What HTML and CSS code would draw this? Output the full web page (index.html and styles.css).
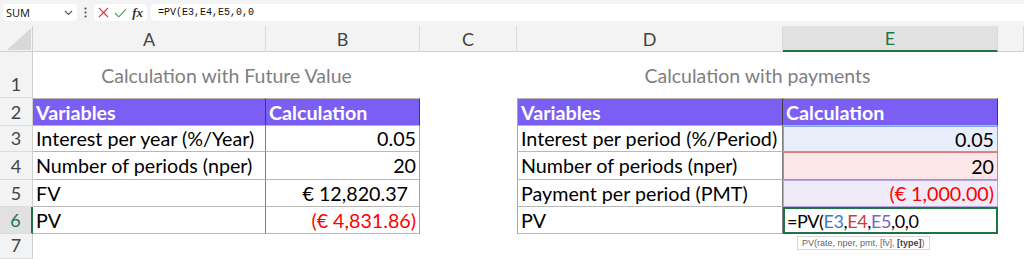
FILE: index.html
```html
<!DOCTYPE html>
<html lang="en">
<head>
  <meta charset="UTF-8">
  <title>PV - Excel</title>
  <link rel="stylesheet" href="styles.css">
</head>
<body>

<!-- FORMULA BAR -->
<div class="toolbar">
  <div class="namebox">
    <span>SUM</span>
    <svg width="9" height="6" viewBox="0 0 9 6"><path d="M1 1 L4.5 4.5 L8 1" fill="none" stroke="#555" stroke-width="1.1"/></svg>
  </div>
  <div class="grip">
    <svg width="3" height="11" viewBox="0 0 3 11"><circle cx="1.5" cy="1.5" r="1.1" fill="#555"/><circle cx="1.5" cy="5.5" r="1.1" fill="#555"/><circle cx="1.5" cy="9.5" r="1.1" fill="#555"/></svg>
  </div>
  <div class="fx-group">
    <svg width="11" height="11" viewBox="0 0 11 11"><path d="M1 1 L10 10 M10 1 L1 10" stroke="#e0393e" stroke-width="1.1"/></svg>
    <svg width="13" height="10" viewBox="0 0 13 10"><path d="M1 5 L4.8 8.8 L12 1.2" fill="none" stroke="#3fa04c" stroke-width="1.1"/></svg>
    <span class="fx">fx</span>
  </div>
  <div class="formula">=PV(E3,E4,E5,0,0</div>
</div>

<!-- PLANILHA -->
<div class="sheet">
  <!-- cabeçalho das colunas -->
  <div class="corner"><svg width="24" height="22" viewBox="0 0 24 22"><path d="M24 0 L24 22 L0 22 Z" fill="#d8d8d8"/></svg></div>
  <div class="ch">A</div>
  <div class="ch">B</div>
  <div class="ch">C</div>
  <div class="ch">D</div>
  <div class="ch ch-sel">E</div>
  <div class="ch"></div>

  <!-- linha 1 -->
  <div class="rh">1</div>
  <div class="title span2">Calculation with Future Value</div>
  <div></div>
  <div class="title span2">Calculation with payments</div>
  <div></div>

  <!-- linha 2 -->
  <div class="rh">2</div>
  <div class="cell hd col-a">Variables</div>
  <div class="cell hd col-b">Calculation</div>
  <div></div>
  <div class="cell hd col-d">Variables</div>
  <div class="cell hd col-e">Calculation</div>
  <div></div>

  <!-- linha 3 -->
  <div class="rh">3</div>
  <div class="cell col-a">Interest per year (%/Year)</div>
  <div class="cell col-b num">0.05</div>
  <div></div>
  <div class="cell col-d">Interest per period (%/Period)</div>
  <div class="cell col-e num ref-blue">0.05</div>
  <div></div>

  <!-- linha 4 -->
  <div class="rh">4</div>
  <div class="cell col-a">Number of periods (nper)</div>
  <div class="cell col-b num">20</div>
  <div></div>
  <div class="cell col-d">Number of periods (nper)</div>
  <div class="cell col-e num ref-red">20</div>
  <div></div>

  <!-- linha 5 -->
  <div class="rh">5</div>
  <div class="cell col-a">FV</div>
  <div class="cell col-b num acct">€ 12,820.37</div>
  <div></div>
  <div class="cell col-d">Payment per period (PMT)</div>
  <div class="cell col-e num ref-purple neg">(€ 1,000.00)</div>
  <div></div>

  <!-- linha 6 -->
  <div class="rh rh-sel">6</div>
  <div class="cell col-a">PV</div>
  <div class="cell col-b num neg">(€ 4,831.86)</div>
  <div></div>
  <div class="cell col-d">PV</div>
  <div class="cell col-e active">=PV(<span class="r-blue">E3</span>,<span class="r-red">E4</span>,<span class="r-purple">E5</span>,0,0</div>
  <div></div>

  <!-- linha 7 -->
  <div class="rh">7</div>
  <div class="span6"></div>
</div>

<div class="tooltip">PV(rate, nper, pmt, [fv], <b>[type]</b>)</div>

</body>
</html>
```

FILE: styles.css
```css
* {
  margin: 0; padding: 0; box-sizing: border-box;
}
body {
  font-family: Lato, "Liberation Sans", sans-serif;
  background-color: #fff;
  width: 1024px;
  height: 259px;
  overflow: hidden;
  position: relative;
}

/* Barra de fórmulas */
.toolbar {
  display: flex;
  align-items: flex-start;
  height: 26px;
  padding: 4px 0 0 3px;
  background-color: #f3f3f3;
}

.namebox {
  width: 74px;
  height: 17px;
  background: #fff;
  border-radius: 4px;
  display: flex;
  align-items: center;
  justify-content: space-between;
  padding: 0 4px 0 3px;
  font: 11px "Noto Sans", sans-serif;
  color: #222;
}

.grip {
  width: 17px;
  height: 17px;
  display: flex;
  align-items: center;
  justify-content: center;
}

.fx-group {
  width: 53px;
  height: 17px;
  background: #fff;
  border-radius: 4px;
  display: flex;
  align-items: center;
  justify-content: space-between;
  padding: 0 4px 0 4px;
}

.fx {
  font: italic bold 13px "Liberation Serif", serif;
  color: #333;
}

.formula {
  flex: 1;
  margin-left: 4px;
  height: 17px;
  background: #fff;
  border-radius: 4px 0 0 4px;
  padding-left: 7px;
  display: flex;
  align-items: center;
  font: 10px "Liberation Mono", monospace;
  color: #111;
}

/* Grade */
.sheet {
  display: grid;
  grid-template-columns: 33px 233px 154px 97px 266px 215px 26px;
  grid-template-rows: 26px 46px 28px 26px 28px 27px 27px 25px;
}

.corner {
  background: #f3f3f3;
  border-bottom: 1px solid #d0d0d0;
  border-right: 1px solid #d0d0d0;
  display: flex;
  align-items: flex-end;
  justify-content: flex-end;
  padding: 0 1px 1px 0;
}

.ch {
  background: #f3f3f3;
  border-right: 1px solid #dadada;
  border-bottom: 1px solid #d0d0d0;
  display: flex;
  align-items: center;
  justify-content: center;
  font-size: 18px;
  color: #444;
}

.ch-sel {
  background: #e1e1e1;
  color: #217346;
  border-bottom: 2px solid #217346;
}

.rh {
  background: #f3f3f3;
  border-bottom: 1px solid #dcdcdc;
  border-right: 1px solid #d0d0d0;
  display: flex;
  align-items: flex-end;
  justify-content: center;
  padding-bottom: 2px;
  font-size: 18px;
  color: #444;
}

.rh-sel {
  background: #e1e1e1;
  color: #217346;
  border-right: 2px solid #217346;
}

.span2 { grid-column: span 2; }
.span6 { grid-column: span 6; }

.title {
  display: flex;
  align-items: center;
  justify-content: center;
  font-size: 19.5px;
  color: #7f7f7f;
}

.cell {
  display: flex;
  align-items: center;
  padding: 0 3px;
  font-size: 19.7px;
  color: #000;
  white-space: nowrap;
  border-bottom: 1px solid #b8b8b8;
}

.col-a { border-right: 1px solid #808080; }
.col-b { border-right: 1px solid #a6a6a6; }
.col-d { border-left: 1px solid #a6a6a6; border-right: 1px solid #808080; }
.col-e { border-right: 1px solid #a6a6a6; }

.hd {
  background-color: #7b5ff5;
  color: #fff;
  font-weight: bold;
  border-top: 1px solid #b8b8b8;
  border-right-color: #404040;
}

.num { justify-content: flex-end; }
.acct { padding-right: 11px; }
.neg { color: #ff0000; }

.ref-blue { background: #e8eef9; border: 1px solid #7fa3dd; }
.ref-red { background: #fbe7e7; border: 1px solid #e27c7c; }
.ref-purple { background: #f0ebf8; border: 1px solid #b7a3e0; }

.active {
  border: 2px solid #217346;
  padding-left: 2px;
  font-size: 18px;
  letter-spacing: -0.4px;
}

.r-blue { color: #3b78d8; }
.r-red { color: #d03a3f; }
.r-purple { color: #8062b8; }

.tooltip {
  position: absolute;
  left: 797px;
  top: 236px;
  height: 14px;
  padding: 0 4px;
  background: #fff;
  border: 1px solid #d6d6d6;
  font: 9px "Liberation Sans", sans-serif;
  line-height: 12px;
  color: #666;
}

.tooltip b { color: #444; }
```
